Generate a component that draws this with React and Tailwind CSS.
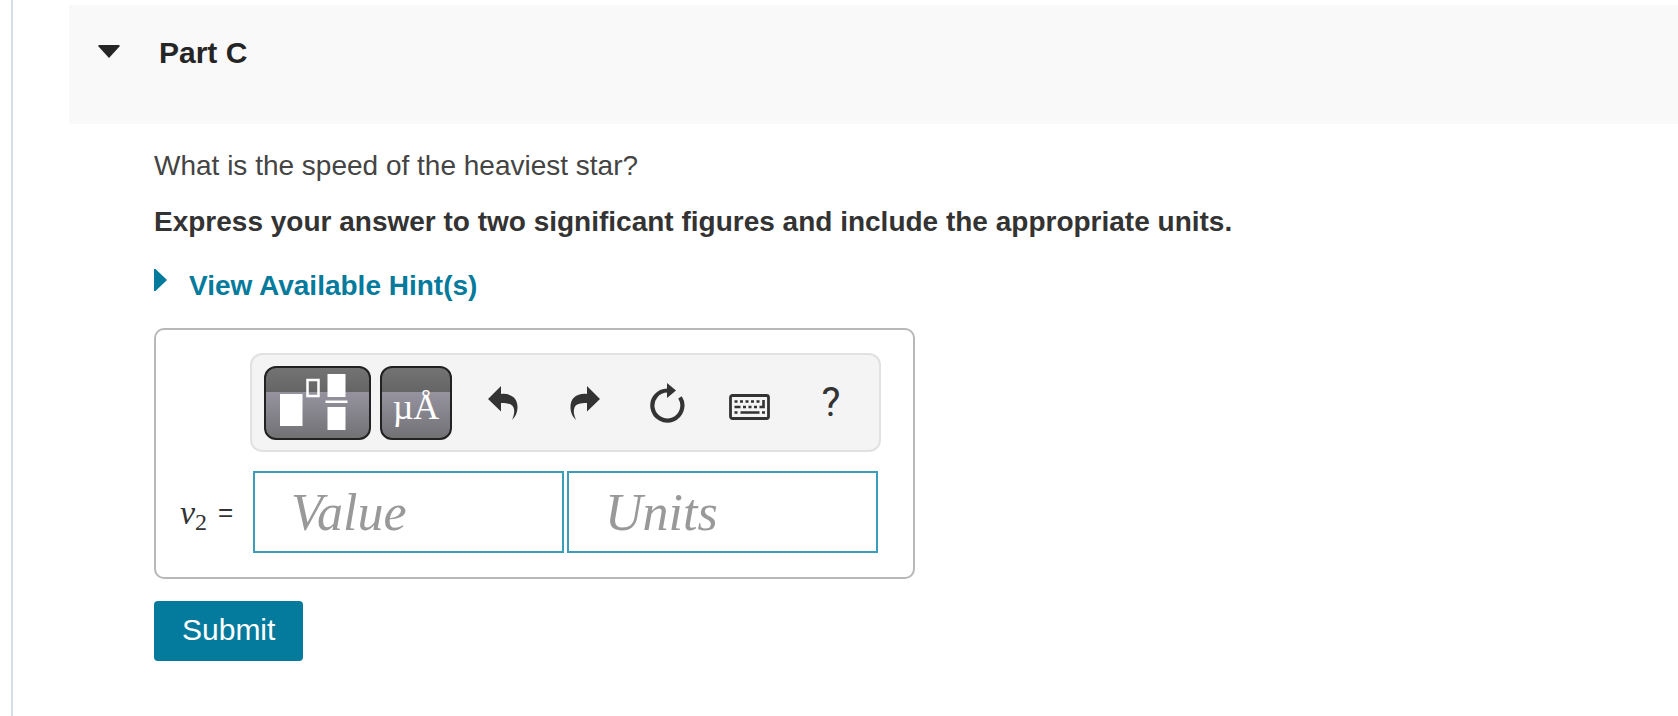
function UndoArrow({ className }) {
  return (
    <svg width="30" height="34" viewBox="0 0 30 34" className={className} fill="#333" aria-hidden="true">
      <path d="M0 13 L13 0 V8 C23 7 29.500 12 29.500 21 C29.500 27 27 31 24 34 C26 29 27 25 25.500 21.500 C24 18 20 17 13 17 V25.500 Z" />
    </svg>
  );
}

function ResetIcon() {
  return (
    <svg width="35" height="40" viewBox="0 0 35 40" aria-hidden="true">
      <path d="M30 14.400 A15 15 0 1 1 17.500 7.500" fill="none" stroke="#333" strokeWidth="4.200" />
      <path d="M17 0 L26 7.500 L17 15 Z" fill="#333" />
    </svg>
  );
}

function KeyboardIcon() {
  return (
    <svg width="41" height="26" viewBox="0 0 41 26" aria-hidden="true">
      <rect x="1.500" y="1.500" width="38" height="23" rx="2" fill="none" stroke="#333" strokeWidth="2.800" />
      <path d="M5.500 7.500h3M11 7.500h3M16.500 7.500h3M22 7.500h3M27.500 7.500h3M5.500 13h6M14 13h3M19.500 13h3M25 13h3M5.500 18.500h3M11.500 18.500h19M33 18.500h3M34.500 6V13H30.500" fill="none" stroke="#333" strokeWidth="2.600" />
    </svg>
  );
}

function TemplateIcon() {
  return (
    <svg width="68" height="56" viewBox="0 0 68 56" aria-hidden="true">
      <g fill="#fff">
        <rect x="0" y="20" width="22.500" height="32" />
        <rect x="47.500" y="0" width="18" height="23" />
        <rect x="45.500" y="26.500" width="22" height="2.500" />
        <rect x="47.500" y="33" width="18" height="23" />
      </g>
      <rect x="27.500" y="6" width="11" height="16" fill="none" stroke="#fff" strokeWidth="2.500" />
    </svg>
  );
}

const darkButton =
  "flex h-[74px] items-center justify-center rounded-xl border-2 border-[#222] bg-[linear-gradient(#737373_0px,#656565_24px,#96939f_24px,#727275_100%)]";
const iconButton = "flex h-[74px] w-[82px] items-center justify-center";
const field =
  "h-[82px] w-0 min-w-0 flex-1 border-2 border-[#3b9dba] bg-white px-9 font-['Liberation_Serif',serif] text-[52px] text-[#333] italic placeholder:text-[#999]";

export default function App() {
  return (
    <div className="min-h-screen bg-white pl-[11px] font-['Liberation_Sans',Arial,sans-serif]">
      <main className="min-h-screen border-l-2 border-[#d3dfec] pt-[5px] pl-14">
        <header className="flex h-[119px] items-start bg-[#f9f9f9] pt-7 pl-[29px]">
          <button type="button" aria-expanded="true" className="flex h-10 items-center gap-[39px] text-[30px] leading-10 font-bold text-[#252525]">
            <svg width="22" height="13" viewBox="0 0 22 13" className="-mt-1" fill="#252525" aria-hidden="true">
              <path d="M1 0H21Q22 0 21.500 1.500L11 13L.5 1.500Q0 0 1 0Z" />
            </svg>
            <span>Part C</span>
          </button>
        </header>

        <form className="flex flex-col items-start pt-6 pl-[85px]" onSubmit={(e) => e.preventDefault()}>
          <p className="text-[28px] leading-9 text-[#444]">What is the speed of the heaviest star?</p>
          <p className="mt-5 text-[28px] leading-9 font-bold text-[#333]">
            Express your answer to two significant figures and include the appropriate units.
          </p>
          <button type="button" aria-expanded="false" className="mt-7 flex items-start gap-[22px] text-[28px] leading-9 font-bold text-[#047a9c]">
            <svg width="13" height="22" viewBox="0 0 13 22" className="mt-px" fill="#047a9c" aria-hidden="true">
              <path d="M0 0H1.500L13 11L1.500 22H0Z" />
            </svg>
            <span>View Available Hint(s)</span>
          </button>

          <section aria-label="Answer" className="mt-6 w-full max-w-[761px] rounded-[10px] border-2 border-[#b8b8b8] pt-[23px] pr-8 pb-6 pl-6">
            <div role="toolbar" aria-label="Math tools" className="ml-[70px] flex h-[99px] items-center rounded-xl border-2 border-[#e1e1e1] bg-[#f4f4f4] pl-3">
              <button type="button" aria-label="Templates" className={`${darkButton} w-[107px] pr-2 pb-0.5`}>
                <TemplateIcon />
              </button>
              <button type="button" aria-label="Symbols" className={`${darkButton} mr-[10px] ml-[9px] w-[72px] pt-2 font-['Liberation_Serif',serif] text-[36px] text-white`}>
                µÅ
              </button>
              <button type="button" aria-label="Undo" className={iconButton}>
                <UndoArrow />
              </button>
              <button type="button" aria-label="Redo" className={iconButton}>
                <UndoArrow className="-scale-x-100" />
              </button>
              <button type="button" aria-label="Reset" className={iconButton}>
                <ResetIcon />
              </button>
              <button type="button" aria-label="Keyboard shortcuts" className={`${iconButton} pt-2`}>
                <KeyboardIcon />
              </button>
              <button type="button" aria-label="Help" className={`${iconButton} font-[Roboto,sans-serif] text-[40px] text-[#333]`}>
                ?
              </button>
            </div>
            <div className="mt-[19px] flex items-center">
              <label htmlFor="value" className="flex w-[73px] shrink-0 items-center gap-[11px] text-[26px] leading-9 text-[#333]">
                <span className="pt-1">
                  <span className="font-['Liberation_Serif',serif] text-[34px] italic">v</span>
                  <sub className="bottom-[-6px] font-['Liberation_Serif',serif] text-[24px]">2</sub>
                </span>
                <span>=</span>
              </label>
              <div className="mr-[3px] flex min-w-0 flex-1 gap-[3px]">
                <input id="value" type="text" placeholder="Value" className={field} />
                <input type="text" aria-label="Units" placeholder="Units" className={field} />
              </div>
            </div>
          </section>

          <button type="submit" className="mt-[22px] h-[60px] rounded bg-[#047a9c] px-7 pb-1 text-[30px] text-white">
            Submit
          </button>
        </form>
      </main>
    </div>
  );
}
